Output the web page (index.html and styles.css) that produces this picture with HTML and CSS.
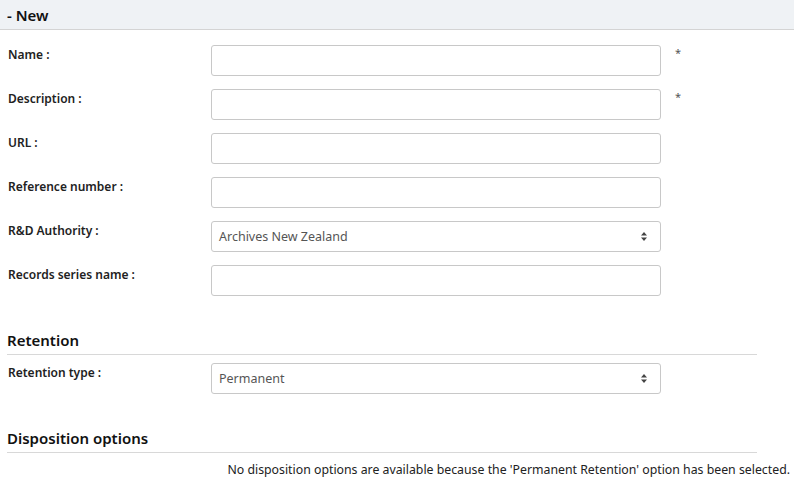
FILE: index.html
```html
<!DOCTYPE html>
<html lang="en">
<head>
  <meta charset="UTF-8">
  <title>New</title>
  <link rel="stylesheet" href="styles.css">
</head>
<body>
  <div class="panel-heading">- New</div>

  <div class="form">
    <div class="row">
      <label>Name :</label>
      <input type="text" class="field">
      <span class="req">*</span>
    </div>
    <div class="row">
      <label>Description :</label>
      <input type="text" class="field">
      <span class="req">*</span>
    </div>
    <div class="row">
      <label>URL :</label>
      <input type="text" class="field">
    </div>
    <div class="row">
      <label>Reference number :</label>
      <input type="text" class="field">
    </div>
    <div class="row">
      <label>R&amp;D Authority :</label>
      <div class="field select">
        <span>Archives New Zealand</span>
        <svg width="8" height="11" viewBox="0 0 8 11"><path d="M4 1 L7 4.5 H1 Z M1 6.5 H7 L4 10 Z" fill="#444"/></svg>
      </div>
    </div>
    <div class="row">
      <label>Records series name :</label>
      <input type="text" class="field">
    </div>

    <h3 class="section">Retention</h3>
    <div class="row">
      <label>Retention type :</label>
      <div class="field select">
        <span>Permanent</span>
        <svg width="8" height="11" viewBox="0 0 8 11"><path d="M4 1 L7 4.5 H1 Z M1 6.5 H7 L4 10 Z" fill="#444"/></svg>
      </div>
    </div>

    <h3 class="section">Disposition options</h3>
    <div class="note">No disposition options are available because the 'Permanent Retention' option has been selected.</div>
  </div>
</body>
</html>
```

FILE: styles.css
```css
body {
  margin: 0;
  font-family: 'Noto Sans', 'Open Sans', sans-serif;
  color: #222;
  background: #fff;
}

.panel-heading {
  background: #eff2f5;
  border-bottom: 1px solid #d4d4d4;
  height: 30px;
  box-sizing: border-box;
  padding: 5px 7px 0;
  font-size: 15px;
  font-weight: 600;
  color: #111;
}

.form {
  padding: 15px 8px 0 7px;
}

.row {
  display: grid;
  grid-template-columns: 204px 450px auto;
  height: 44px;
}

.row label {
  font-size: 12px;
  font-weight: 600;
  padding-top: 1px;
  padding-left: 1px;
}

.field {
  box-sizing: border-box;
  height: 31px;
  border: 1px solid #c8c8c8;
  border-radius: 3px;
  margin: 0;
  background: #fff;
}

.select {
  display: flex;
  align-items: center;
  justify-content: space-between;
  padding: 0 12px 0 7px;
  font-size: 12.5px;
  color: #555;
}

.req {
  font-size: 11px;
  color: #555;
  padding-left: 14px;
}

.section {
  margin: 0 29px 8px 0;
  padding: 21px 0 4px;
  height: 20px;
  font-size: 15px;
  font-weight: 600;
  line-height: 20px;
  border-bottom: 1px solid #d8d8d8;
  color: #111;
}

.note {
  text-align: right;
  font-size: 12.3px;
  margin-right: -4px;
}
```
